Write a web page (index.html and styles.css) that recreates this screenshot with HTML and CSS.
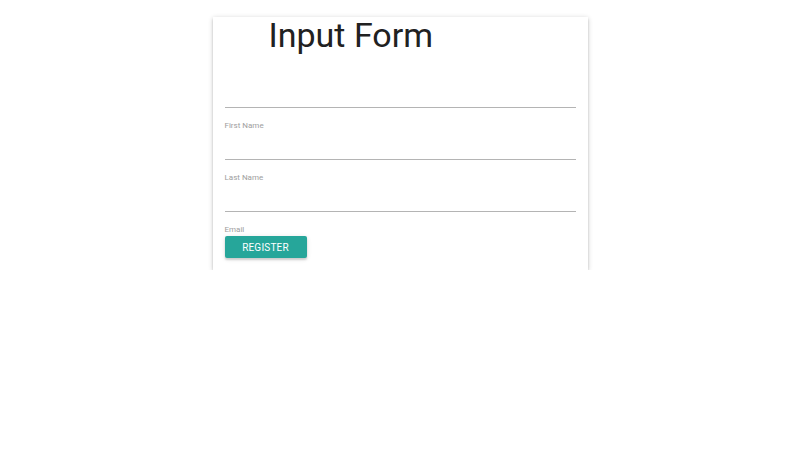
FILE: index.html
```html
<!DOCTYPE html>
<html>
<head>
<meta charset="utf-8">
<link rel="stylesheet" href="styles.css">
</head>
<body>
<form class="card">
  <h1 class="title">Input Form</h1>
  <div class="field">
    <input class="field-input" type="text" id="first">
    <label class="field-label" for="first">First Name</label>
  </div>
  <div class="field">
    <input class="field-input" type="text" id="last">
    <label class="field-label" for="last">Last Name</label>
  </div>
  <div class="field">
    <input class="field-input" type="email" id="email">
    <label class="field-label" for="email">Email</label>
  </div>
  <button class="btn" type="button">Register</button>
</form>
</body>
</html>
```
FILE: styles.css
```css
body {
  margin: 0;
  background: #fff;
  font-family: Roboto, "Liberation Sans", sans-serif;
}

.card {
  width: 375px;
  margin: 17px auto 0;
  padding: 0 12px 12px;
  box-sizing: border-box;
  background: #fff;
  box-shadow: 0 2px 2px 0 rgba(0,0,0,0.14), 0 3px 1px -2px rgba(0,0,0,0.12), 0 1px 5px 0 rgba(0,0,0,0.2);
  display: flex;
  flex-direction: column;
  align-items: flex-start;
}

.title {
  margin: 0 0 0 44px;
  font-size: 34px;
  font-weight: 400;
  line-height: 36px;
  color: #212121;
}

.field {
  width: 100%;
  display: flex;
  flex-direction: column;
}

.field-input {
  height: 29px;
  margin: 0;
  padding: 0;
  border: none;
  border-bottom: 1px solid #b4b4b4;
  outline: none;
  font: inherit;
  background: transparent;
}

.title + .field .field-input {
  margin-top: 25px;
}

.field-label {
  margin-top: 13px;
  font-size: 8px;
  line-height: 9px;
  color: #9e9e9e;
}

.btn {
  margin-top: 2px;
  width: 82px;
  height: 22px;
  border: none;
  border-radius: 2px;
  background: #26a69a;
  color: #fff;
  font-family: inherit;
  font-size: 10px;
  letter-spacing: 0.2px;
  text-transform: uppercase;
  padding: 0;
  box-shadow: 0 2px 2px 0 rgba(0,0,0,0.14), 0 1px 5px 0 rgba(0,0,0,0.12);
}
```
